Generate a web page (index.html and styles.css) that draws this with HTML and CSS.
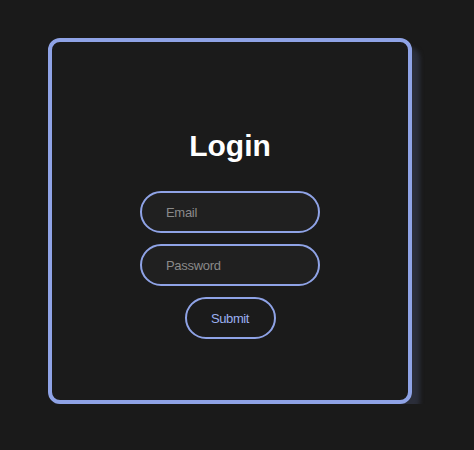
FILE: index.html
```html
<!DOCTYPE html>
<html>
<head>
<meta charset="utf-8">
<link rel="stylesheet" href="styles.css">
</head>
<body>
<div class="page">
  <form class="card">
    <h1 class="title">Login</h1>
    <input class="field" type="email" placeholder="Email">
    <input class="field" type="password" placeholder="Password">
    <button class="submit" type="button">Submit</button>
  </form>
</div>
</body>
</html>
```
FILE: styles.css
```css
html, body {
  margin: 0;
  padding: 0;
  background: #1a1a1a;
  font-family: "Liberation Sans", Arial, sans-serif;
}
.page {
  padding: 38px 0 0 48px;
}
.card {
  box-sizing: border-box;
  width: 364px;
  height: 366px;
  border: 4px solid #8fa3e6;
  border-radius: 12px;
  background: #1b1b1b;
  box-shadow: 8px 9px 4px #2b2e3a;
  display: flex;
  flex-direction: column;
  align-items: center;
  gap: 11px;
  margin: 0;
}
.title {
  margin: 87px 0 17px;
  font-size: 30px;
  line-height: 34px;
  font-weight: bold;
  color: #ffffff;
}
.field {
  box-sizing: border-box;
  width: 180px;
  height: 42px;
  border: 2px solid #8fa3e6;
  border-radius: 21px;
  background: #202020;
  padding: 0 24px;
  font-family: inherit;
  font-size: 13px;
  letter-spacing: -0.3px;
  color: #dddddd;
  outline: none;
}
.field::placeholder {
  color: #8a8a8a;
}
.submit {
  box-sizing: border-box;
  width: 91px;
  height: 42px;
  border: 2px solid #8fa3e6;
  border-radius: 21px;
  background: #1b1b1b;
  font-family: inherit;
  font-size: 13px;
  letter-spacing: -0.4px;
  color: #9bb0f0;
  cursor: pointer;
}
```
